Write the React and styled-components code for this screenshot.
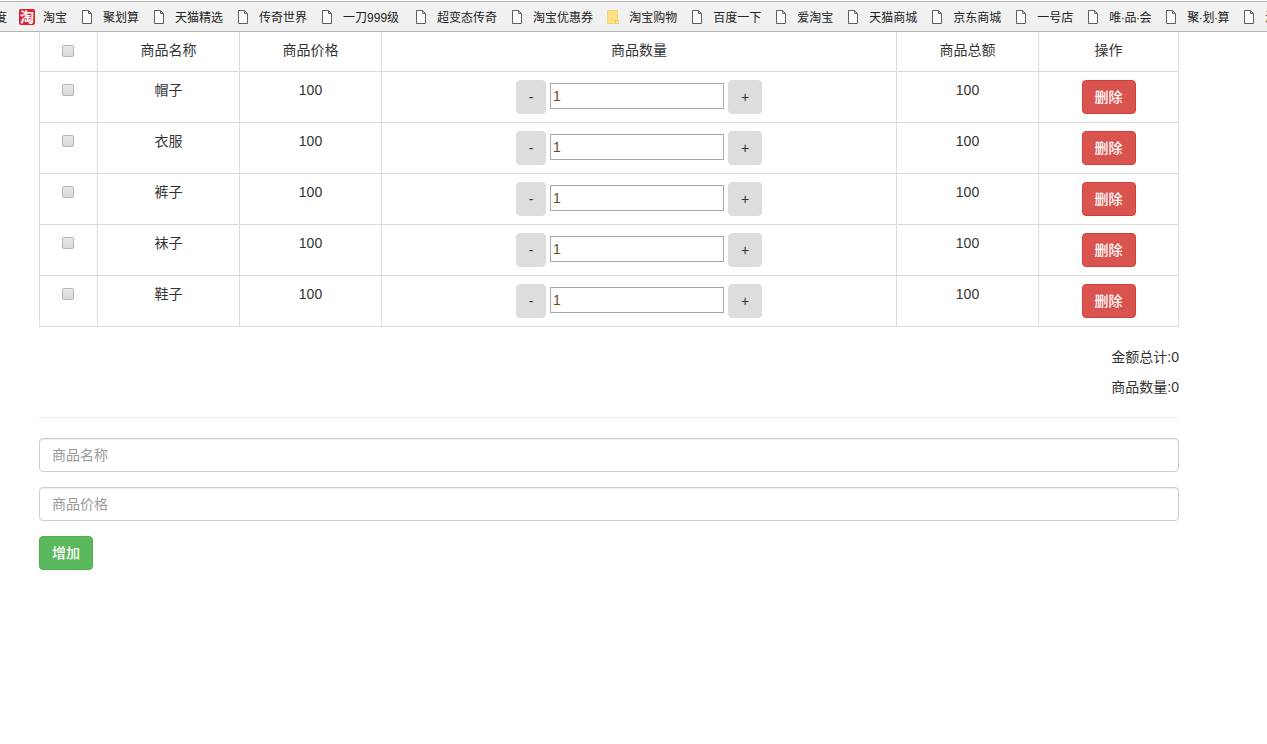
import React from "react";
import styled, { createGlobalStyle } from "styled-components";

const Global = createGlobalStyle`
  html, body { margin: 0; padding: 0; background: #fff; }
  body {
    font-family: "Liberation Sans", "Noto Sans CJK SC", sans-serif;
    font-size: 14px;
    line-height: 20px;
    color: #333;
  }
  * { box-sizing: border-box; }
`;

const BookmarkBar = styled.div`
  height: 31px;
  margin-top: 1px;
  padding-top: 1px;
  display: flex;
  align-items: center;
  overflow: hidden;
  white-space: nowrap;
  background-color: #f1f1f1;
  background-image: radial-gradient(circle, #fbfbfb 0.6px, transparent 0.7px);
  background-size: 4px 4px;
  border-top: 1px solid #b4b4b4;
  border-bottom: 1px solid #b4b4b4;
  font-size: 12px;
  color: #222;
`;

const Clipped = styled.span`
  margin-left: -5px;
  width: 12px;
  margin-right: 12px;
  padding-top: 2px;
  flex: none;
`;

const Bookmark = styled.div`
  display: flex;
  align-items: center;
  flex: none;
  margin-right: ${(p) => p.$after ?? 14}px;
`;

const Label = styled.span`
  padding-top: 2px;
  letter-spacing: ${(p) => (p.$tight ? "-0.4px" : "0")};
`;

const IconSlot = styled.span`
  width: 22px;
  height: 16px;
  flex: none;
  display: block;
`;

const TaobaoLogo = styled.span`
  width: 16px;
  height: 16px;
  margin-right: 8px;
  flex: none;
  display: block;
  border-radius: 2px;
  background: #dc2430;
  color: #fff;
  font-size: 14px;
  font-weight: 700;
  line-height: 16px;
  text-align: center;
`;

const PageIcon = () => (
  <IconSlot>
    <svg width="12" height="16" viewBox="0 0 12 16" fill="none">
      <path d="M1.5 1.5H7.5L10.5 4.5V14.5H1.5Z" fill="#fff" stroke="#5e5e5e" />
      <path d="M7.5 1.5V4.5H10.5" stroke="#5e5e5e" />
    </svg>
  </IconSlot>
);

const FolderIcon = () => (
  <IconSlot>
    <svg width="12" height="16" viewBox="0 0 12 16">
      <path d="M0.5 1.5H10.5V11.5H11.5V14.5H0.5Z" fill="#fde083" stroke="#f3d47c" />
      <path d="M8.5 14V11.5H10.5" fill="none" stroke="#e9c45e" />
    </svg>
  </IconSlot>
);

const Page = styled.main`
  width: 1179px;
  padding-left: 39px;
`;

const Table = styled.table`
  width: 1139px;
  table-layout: fixed;
  border-collapse: collapse;
  margin-bottom: 20px;
`;

const HeadCell = styled.th`
  border: 1px solid #ddd;
  border-top: 0;
  padding: 8px;
  height: 39px;
  font-weight: 400;
  text-align: center;
  vertical-align: top;
`;

const Cell = styled.td`
  border: 1px solid #ddd;
  padding: 8px;
  height: 51px;
  text-align: center;
  vertical-align: top;
`;

const Check = styled.input.attrs({ type: "checkbox" })`
  appearance: none;
  display: block;
  width: 12px;
  height: 12px;
  margin: ${(p) => (p.$head ? 5 : 4)}px 0 0 14px;
  border: 1px solid #b5b5b5;
  border-radius: 2px;
  background: linear-gradient(#e8e8e8, #d8d8d8);
`;

const Stepper = styled.div`
  display: flex;
  justify-content: center;
  align-items: flex-start;
  gap: 4px;
`;

const StepButton = styled.button`
  width: ${(p) => p.$width}px;
  height: 34px;
  padding: 0;
  border: 1px solid #ddd;
  border-radius: 4px;
  background: #ddd;
  color: #333;
  font: inherit;
`;

const Qty = styled.input`
  width: 174px;
  height: 26px;
  margin-top: 3px;
  padding: 1px 2px;
  border: 1px solid #a9a9a9;
  background: #fff;
  color: #6b4a14;
  font: inherit;
  font-size: 14px;
`;

const ActionButton = styled.button`
  display: block;
  width: 54px;
  height: 34px;
  padding: 0;
  border-radius: 4px;
  border: 1px solid ${(p) => (p.$kind === "add" ? "#4cae4c" : "#d43f3a")};
  background: ${(p) => (p.$kind === "add" ? "#5cb85c" : "#d9534f")};
  color: #fff;
  font: inherit;
  font-weight: 500;
  margin: ${(p) => (p.$kind === "add" ? "0" : "0 auto")};
`;

const Summary = styled.p`
  margin: 0 0 10px;
  text-align: right;
`;

const Rule = styled.hr`
  border: 0;
  border-top: 1px solid #eee;
  margin: 20px 0;
`;

const Field = styled.input`
  display: block;
  width: 100%;
  height: 34px;
  margin-bottom: 15px;
  padding: 6px 12px;
  border: 1px solid #ccc;
  border-radius: 4px;
  box-shadow: inset 0 1px 1px rgba(0, 0, 0, 0.075);
  font: inherit;
  color: #555;
  &::placeholder { color: #999; opacity: 1; }
`;

const bookmarks = [
  { name: "聚划算" },
  { name: "天猫精选" },
  { name: "传奇世界" },
  { name: "一刀999级", after: 16 },
  { name: "超变态传奇" },
  { name: "淘宝优惠券" },
  { name: "淘宝购物", folder: true },
  { name: "百度一下" },
  { name: "爱淘宝" },
  { name: "天猫商城" },
  { name: "京东商城" },
  { name: "一号店" },
  { name: "唯·品·会", tight: true },
  { name: "聚·划·算", tight: true },
  { name: "淘宝" },
];

const goods = ["帽子", "衣服", "裤子", "袜子", "鞋子"];
const widths = [58, 142, 142, 515, 142, 140];
const heads = ["商品名称", "商品价格", "商品数量", "商品总额", "操作"];

export default function App() {
  return (
    <>
      <Global />
      <BookmarkBar>
        <Clipped>度</Clipped>
        <Bookmark>
          <TaobaoLogo>淘</TaobaoLogo>
          <Label>淘宝</Label>
        </Bookmark>
        {bookmarks.map((b) => (
          <Bookmark key={b.name} $after={b.after}>
            {b.folder ? <FolderIcon /> : <PageIcon />}
            <Label $tight={b.tight}>{b.name}</Label>
          </Bookmark>
        ))}
      </BookmarkBar>
      <Page>
        <Table>
          <colgroup>
            {widths.map((w, i) => <col key={i} width={w} />)}
          </colgroup>
          <thead>
            <tr>
              <HeadCell><Check $head /></HeadCell>
              {heads.map((h) => <HeadCell key={h}>{h}</HeadCell>)}
            </tr>
          </thead>
          <tbody>
            {goods.map((g) => (
              <tr key={g}>
                <Cell><Check /></Cell>
                <Cell>{g}</Cell>
                <Cell>100</Cell>
                <Cell>
                  <Stepper>
                    <StepButton $width={30}>-</StepButton>
                    <Qty defaultValue="1" />
                    <StepButton $width={34}>+</StepButton>
                  </Stepper>
                </Cell>
                <Cell>100</Cell>
                <Cell><ActionButton>删除</ActionButton></Cell>
              </tr>
            ))}
          </tbody>
        </Table>
        <Summary>金额总计:0</Summary>
        <Summary>商品数量:0</Summary>
        <Rule />
        <Field placeholder="商品名称" />
        <Field placeholder="商品价格" />
        <ActionButton $kind="add">增加</ActionButton>
      </Page>
    </>
  );
}
